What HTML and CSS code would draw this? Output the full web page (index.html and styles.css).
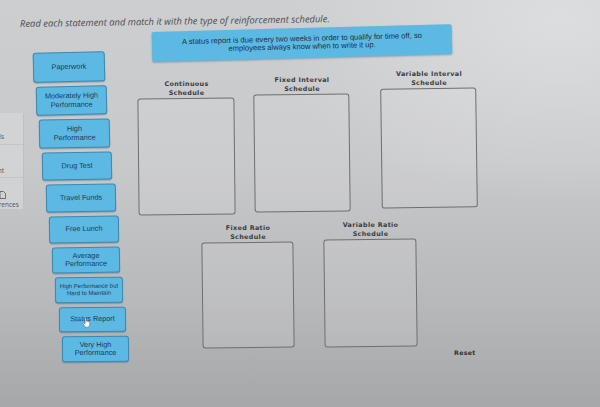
FILE: index.html
```html
<!DOCTYPE html>
<html lang="en">
<head>
<meta charset="utf-8">
<title>Reinforcement schedules</title>
<link rel="stylesheet" href="styles.css">
</head>
<body>
<div class="page">
  <aside class="side">
    <div class="side-item"><span>Tools</span></div>
    <div class="side-item"><span>Print</span></div>
    <div class="side-item icon-item">
      <svg class="doc" width="7" height="8" viewBox="0 0 7 8"><path d="M1 .5h3.5l2 2v5H1z" fill="none" stroke="#555" stroke-width=".8"/></svg>
      <span>References</span>
    </div>
  </aside>
  <main class="main">
    <p class="title">Read each statement and match it with the type of reinforcement schedule.</p>
    <div class="content">
      <div class="cards">
        <div class="card c1">Paperwork</div>
        <div class="card c2">Moderately High Performance</div>
        <div class="card c3">High<br>Performance</div>
        <div class="card c4">Drug Test</div>
        <div class="card c5">Travel Funds</div>
        <div class="card c6">Free Lunch</div>
        <div class="card c7">Average<br>Performance</div>
        <div class="card c8 small">High Performance but Hard to Maintain</div>
        <div class="card c9">Status Report
          <svg class="cursor" width="9" height="11" viewBox="0 0 9 11"><path d="M3 1.2c0-.7 1.2-.7 1.2 0v3.3l.2-.6c.3-.5 1-.4 1.1.1l.1.4c.3-.4 1-.3 1.1.2v.3c.4-.3 1-.1 1 .4v2.2c0 1.4-1 2.6-2.5 2.6H4.5c-.9 0-1.5-.5-2-1.2L1 6.8c-.4-.6.4-1.2.9-.7L3 7.1z" fill="#fff" stroke="#555" stroke-width=".5"/></svg>
        </div>
        <div class="card c10">Very High<br>Performance</div>
      </div>
      <div class="board">
        <div class="prompt">A status report is due every two weeks in order to qualify for time off, so employees always know when to write it up.</div>
        <div class="row row1">
          <div class="zone z-cont">
            <div class="zlabel">Continuous<br>Schedule</div>
            <div class="zbox"></div>
          </div>
          <div class="zone z-fi">
            <div class="zlabel">Fixed Interval<br>Schedule</div>
            <div class="zbox"></div>
          </div>
          <div class="zone z-vi">
            <div class="zlabel">Variable Interval<br>Schedule</div>
            <div class="zbox"></div>
          </div>
        </div>
        <div class="row row2">
          <div class="zone z-fr">
            <div class="zlabel">Fixed Ratio<br>Schedule</div>
            <div class="zbox"></div>
          </div>
          <div class="zone z-vr">
            <div class="zlabel">Variable Ratio<br>Schedule</div>
            <div class="zbox"></div>
          </div>
          <div class="reset">Reset</div>
        </div>
      </div>
    </div>
  </main>
</div>
</body>
</html>
```
FILE: styles.css
```css
html, body {
  margin: 0;
  padding: 0;
}
body {
  width: 600px;
  height: 407px;
  overflow: hidden;
  background:
    radial-gradient(ellipse 420px 260px at 560px 20px, rgba(222,223,225,0.9), rgba(222,223,225,0) 70%),
    linear-gradient(180deg, #cdced0 0%, #c8c9cb 40%, #b7b8ba 75%, #a6a7a9 100%);
  font-family: "Liberation Sans", Arial, sans-serif;
  color: #222;
}
.page {
  display: flex;
  height: 407px;
}
.side {
  width: 58px;
  flex: none;
  margin-left: -35px;
  margin-top: 113px;
  height: 96px;
  background: rgba(214,215,217,0.7);
  border-right: 1px solid #bfc0c2;
  display: flex;
  flex-direction: column;
}
.side-item {
  height: 32px;
  display: flex;
  justify-content: flex-end;
  align-items: center;
  white-space: nowrap;
  border-bottom: 1px solid #c4c5c7;
  font-family: "Open Sans", sans-serif;
  font-size: 6.5px;
  color: #555;
  padding-right: 19px;
}
.side-item span {
  flex: none;
}
.side-item:first-child span { margin-top: 16px; }
.side-item:nth-child(2) span { margin-top: 20px; }
.icon-item {
  flex-direction: column;
  align-items: center;
  justify-content: flex-end;
  padding: 0 0 0 16px;
  border-bottom: none;
}
.icon-item .doc {
  margin-bottom: 1px;
  flex: none;
}
.main {
  flex: 1;
}
.title {
  margin: 19px 0 0 -4px;
  font-family: "Open Sans", sans-serif;
  font-style: italic;
  font-size: 9.4px;
  line-height: 9px;
  color: #4b4c4e;
  transform: rotate(-0.9deg);
  transform-origin: left center;
  white-space: nowrap;
}
.content {
  display: flex;
  align-items: flex-start;
}
.cards {
  width: 114px;
  flex: none;
  margin-top: 24px;
  display: flex;
  flex-direction: column;
  gap: 4px;
}
.card {
  position: relative;
  width: 70px;
  box-sizing: border-box;
  background: #5cb9e3;
  border: 1px solid #3d89b1;
  border-radius: 3px;
  box-shadow: 0 1px 1px rgba(40,80,110,0.35);
  display: flex;
  align-items: center;
  justify-content: center;
  text-align: center;
  font-size: 7.3px;
  line-height: 8.5px;
  color: #1e3a56;
  padding: 0 3px;
}
.card.small {
  font-size: 6px;
  line-height: 7px;
}
.c1 { margin-left: 9px; height: 30px; width: 72px; transform: rotate(-1.3deg); }
.c2 { margin-left: 12px; height: 29px; width: 71px; transform: rotate(-1.2deg); }
.c3 { margin-left: 15px; height: 29px; width: 71px; transform: rotate(-1deg); }
.c4 { margin-left: 18px; height: 28px; transform: rotate(-1deg); }
.c5 { margin-left: 22px; height: 28px; transform: rotate(-0.9deg); }
.c6 { margin-left: 25px; height: 27px; transform: rotate(-0.8deg); }
.c7 { margin-left: 28px; height: 26px; width: 68px; transform: rotate(-0.7deg); }
.c8 { margin-left: 31px; height: 26px; width: 68px; transform: rotate(-0.6deg); }
.c9 { margin-left: 35px; height: 25px; width: 67px; transform: rotate(-0.5deg); }
.c10 { margin-left: 38px; height: 26px; width: 67px; transform: rotate(-0.4deg); }
.cursor {
  position: absolute;
  left: 22px;
  top: 9px;
}
.board {
  flex: 1;
  display: flex;
  flex-direction: column;
}
.prompt {
  margin-left: 14px;
  width: 300px;
  height: 30px;
  box-sizing: border-box;
  background: #5cb9e3;
  border-radius: 2px;
  box-shadow: 0 1px 2px rgba(40,80,110,0.4);
  display: flex;
  align-items: center;
  justify-content: center;
  text-align: center;
  padding: 0 17px;
  font-size: 7.6px;
  line-height: 8.5px;
  color: #1e2e40;
  transform: rotate(-1.5deg);
}
.row {
  display: flex;
  align-items: flex-start;
}
.zone {
  display: flex;
  flex-direction: column;
  align-items: stretch;
}
.zlabel {
  height: 18px;
  text-align: center;
  font-family: "DejaVu Sans", sans-serif;
  font-weight: bold;
  font-size: 6.4px;
  line-height: 8.5px;
  letter-spacing: 0.35px;
  color: #3b3c3e;
}
.zbox {
  box-sizing: border-box;
  border: 1px solid #6e6f71;
  border-radius: 3px;
  background: rgba(235,236,238,0.12);
}
.z-cont { margin-top: 22px; width: 97px; }
.z-cont .zbox { height: 117px; transform: rotate(-0.6deg); }
.z-fi { margin-left: 19px; margin-top: 18px; width: 96px; }
.z-fi .zbox { height: 118px; transform: rotate(-0.7deg); }
.z-vi { margin-left: 31px; margin-top: 12px; width: 96px; }
.z-vi .zbox { height: 120px; transform: rotate(-0.8deg); }
.z-fr { margin-left: 64px; margin-top: 9px; width: 92px; }
.z-fr .zbox { height: 106px; transform: rotate(-0.7deg); }
.z-vr { margin-left: 30px; margin-top: 6px; width: 93px; }
.z-vr .zbox { height: 108px; transform: rotate(-0.7deg); }
.reset {
  margin-left: 37px;
  margin-top: 134px;
  font-family: "DejaVu Sans", sans-serif;
  font-weight: bold;
  font-size: 6.3px;
  letter-spacing: 0.3px;
  color: #333;
}
```
